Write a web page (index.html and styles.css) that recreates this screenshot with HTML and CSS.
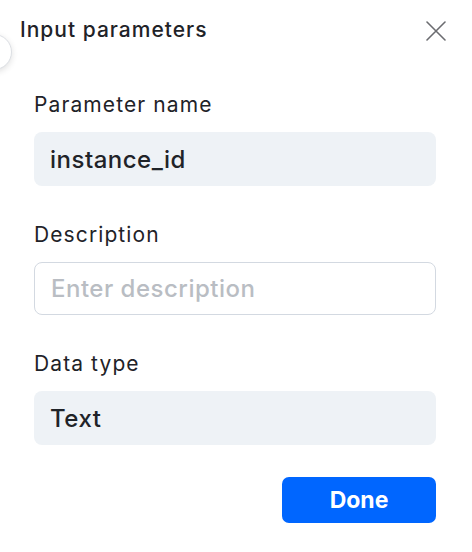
FILE: index.html
```html
<!DOCTYPE html>
<html lang="en">
<head>
<meta charset="utf-8">
<title>Input parameters</title>
<link rel="stylesheet" href="styles.css">
</head>
<body>
<div class="panel">
  <div class="edge-handle"></div>
  <header class="header">
    <h1 class="title">Input parameters</h1>
    <button class="close" aria-label="Close">
      <svg width="20" height="20" viewBox="0 0 20 20" fill="none" stroke="#6b6c70" stroke-width="1.6" stroke-linecap="round">
        <path d="M1 1L19 19M19 1L1 19"/>
      </svg>
    </button>
  </header>
  <form class="form">
    <div class="group">
      <label class="label">Parameter name</label>
      <div class="field filled value">instance_id</div>
    </div>
    <div class="group">
      <label class="label">Description</label>
      <div class="field outlined placeholder">Enter description</div>
    </div>
    <div class="group">
      <label class="label">Data type</label>
      <div class="field filled value">Text</div>
    </div>
    <div class="actions">
      <button type="button" class="done">Done</button>
    </div>
  </form>
</div>
</body>
</html>
```
FILE: styles.css
```css
* { box-sizing: border-box; }
html, body {
  margin: 0;
  padding: 0;
  background: #ffffff;
}
body {
  font-family: Inter, "Noto Sans", sans-serif;
  color: #1f2328;
  width: 472px;
  height: 552px;
  overflow: hidden;
}
.panel {
  position: relative;
  width: 472px;
  height: 552px;
}
.edge-handle {
  position: absolute;
  left: -24px;
  top: 34px;
  width: 36px;
  height: 36px;
  border-radius: 50%;
  border: 1px solid #dcdfe4;
  background: #fff;
  box-shadow: 0 2px 6px rgba(0,0,0,0.12);
}
.header {
  display: flex;
  align-items: center;
  justify-content: space-between;
  height: 58px;
  padding: 0 26px 0 20px;
}
.title {
  margin: 0;
  font-size: 21px;
  font-weight: 500;
  letter-spacing: 1px;
  color: #1f2328;
}
.close {
  border: 0;
  background: none;
  padding: 0;
  width: 20px;
  height: 20px;
  display: flex;
  margin-top: 4px;
}
.form {
  display: flex;
  flex-direction: column;
  padding: 33px 36px 0 34px;
  gap: 35px;
}
.group {
  display: flex;
  flex-direction: column;
  gap: 13px;
}
.label {
  font-size: 21px;
  line-height: 28px;
  font-weight: 400;
  letter-spacing: 1.1px;
  color: #1f2328;
}
.field {
  height: 54px;
  border-radius: 8px;
  display: flex;
  align-items: center;
  padding: 0 16px;
  font-size: 24px;
  letter-spacing: 0.5px;
}
.filled {
  background: #eef2f6;
}
.value {
  font-weight: 500;
  color: #1f2328;
}
.outlined {
  height: 53px;
  border: 1.5px solid #d3d9e1;
  background: #fff;
  padding-left: 16px;
}
.placeholder {
  color: #b9bdc3;
  font-weight: 500;
}
.actions {
  display: flex;
  justify-content: flex-end;
  margin-top: -3px;
}
.done {
  width: 154px;
  height: 46px;
  border: 0;
  border-radius: 7px;
  background: #0066ff;
  color: #fff;
  font-family: Inter, "Noto Sans", sans-serif;
  font-size: 23px;
  font-weight: 700;
}
```
